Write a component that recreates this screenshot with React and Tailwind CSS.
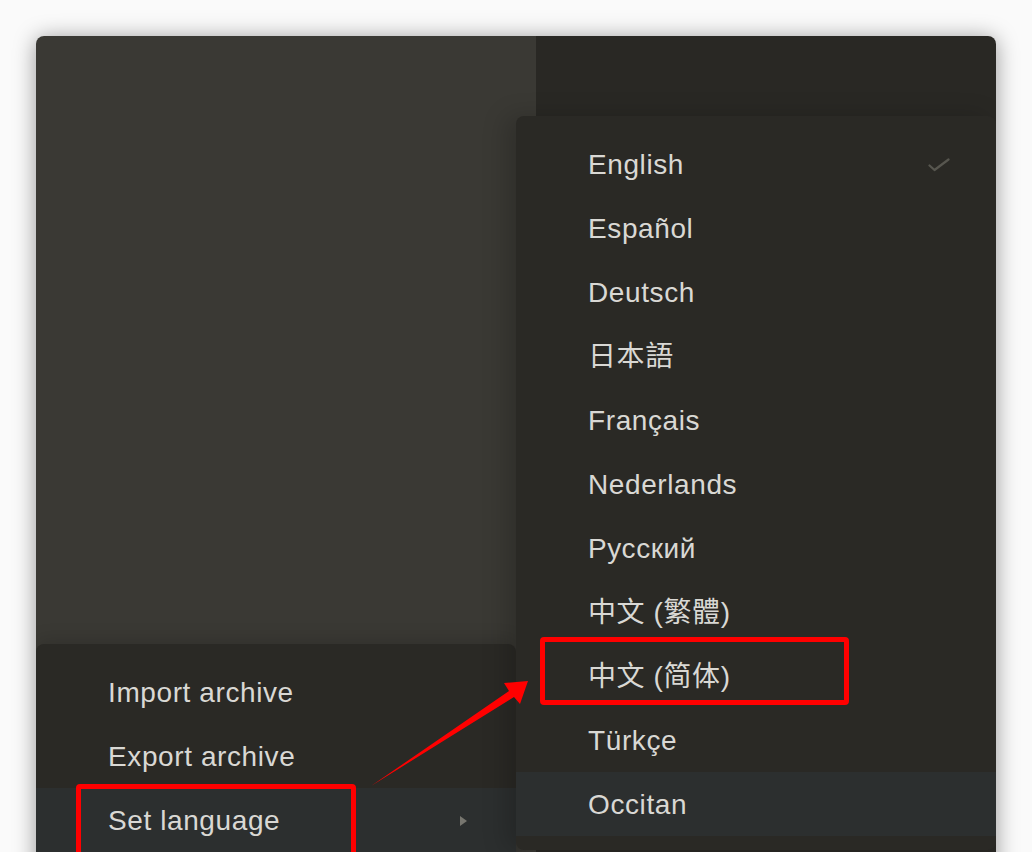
import React from "react";

const languages = [
  { label: "English", checked: true },
  { label: "Español" },
  { label: "Deutsch" },
  { label: "日本語" },
  { label: "Français" },
  { label: "Nederlands" },
  { label: "Русский" },
  { label: "中文 (繁體)" },
  { label: "中文 (简体)" },
  { label: "Türkçe" },
  { label: "Occitan", active: true },
];

const fontStack = {
  fontFamily: '"Liberation Sans", "Noto Sans CJK SC", sans-serif',
};

function Check() {
  return (
    <svg width="22" height="14" viewBox="0 0 22 14" fill="none">
      <path
        d="M1.5 7.5 L6.5 12 L20.5 1.5"
        stroke="#57564f"
        strokeWidth="2.2"
        strokeLinecap="round"
        strokeLinejoin="round"
      />
    </svg>
  );
}

export default function App() {
  return (
    <div
      className="relative h-[852px] w-[1032px] overflow-hidden bg-[#fafafa] pt-9 pl-9"
      style={fontStack}
    >
      {/* Window */}
      <div className="relative flex h-[900px] w-[960px] overflow-hidden rounded-lg shadow-[0_2px_22px_rgba(0,0,0,0.4)]">
        <div className="w-[500px] bg-[#3a3934]" />
        <div className="flex-1 bg-[#292824]" />

        {/* Main menu */}
        <div className="absolute top-[608px] left-0 w-[480px] rounded-t-lg bg-[#2a2925] pt-4 pb-6 shadow-[0_-4px_18px_rgba(0,0,0,0.15)]">
          <div className="flex h-16 items-center pt-0.5 pl-[72px] text-[28px] tracking-[0.6px] text-[#d9d8d4]">
            Import archive
          </div>
          <div className="flex h-16 items-center pt-0.5 pl-[72px] text-[28px] tracking-[0.6px] text-[#d9d8d4]">
            Export archive
          </div>
          <div className="flex h-16 items-center justify-between bg-[#2c2f2f] pt-0.5 pr-[49px] pl-[72px] text-[28px] tracking-[0.6px] text-[#d9d8d4]">
            <span>Set language</span>
            <span className="h-0 w-0 border-y-[5px] border-l-[7px] border-y-transparent border-l-[#77766f]" />
          </div>
        </div>

        {/* Language submenu */}
        <div className="absolute top-20 left-[480px] w-[480px] rounded-lg bg-[#2a2925] pt-4 pb-[14px] shadow-[-10px_0_24px_rgba(0,0,0,0.18)]">
          {languages.map((lang) => (
            <div
              key={lang.label}
              className={`flex h-16 items-center justify-between pt-0.5 pr-[46px] pl-[72px] text-[28px] tracking-[0.6px] text-[#d9d8d4] ${
                lang.active ? "bg-[#2c2f2f]" : ""
              }`}
            >
              <span>{lang.label}</span>
              {lang.checked && <Check />}
            </div>
          ))}
        </div>
      </div>

      {/* Annotations */}
      <div className="absolute top-[784px] left-[76px] h-[80px] w-[280px] rounded-[4px] border-[5px] border-[#ff0000]" />
      <div className="absolute top-[637px] left-[540px] h-[68px] w-[309px] rounded-[4px] border-[5px] border-[#ff0000]" />
      <svg
        className="absolute top-0 left-0"
        width="1032"
        height="852"
        viewBox="0 0 1032 852"
      >
        <polygon
          points="371,786 509,691 504,683 528,681 520,704 514,697"
          fill="#ff0000"
        />
      </svg>
    </div>
  );
}
